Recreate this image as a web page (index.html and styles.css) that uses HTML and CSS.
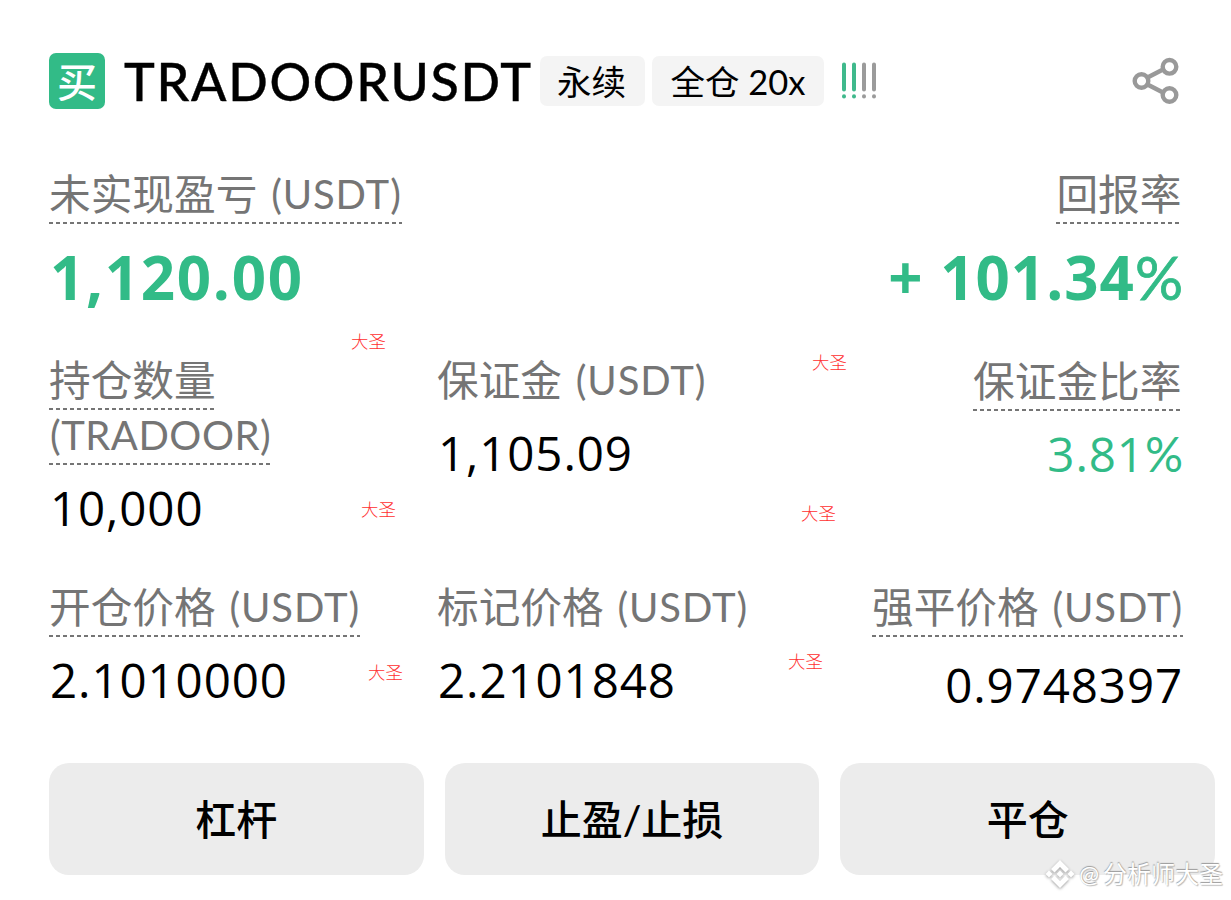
FILE: index.html
```
<!DOCTYPE html>
<html lang="zh-CN">
<head>
  <meta charset="UTF-8">
  <meta name="viewport" content="width=device-width, initial-scale=1.0">
  <title>TRADOORUSDT</title>
  <link rel="stylesheet" href="styles.css">
</head>
<body>
  <div class="position-card">
    <header class="card-header">
      <span class="side-badge">买</span>
      <h1 class="symbol">TRADOORUSDT</h1>
      <span class="tag tag-type">永续</span>
      <span class="tag tag-mode">全仓 <span class="leverage">20x</span></span>
      <svg class="risk-icon" width="38" height="40" viewBox="0 0 38 40" stroke-width="4" stroke-linecap="round">
        <g stroke="#3fb98c"><path d="M4 3.5v25M14 3.5v25M4 35.2v.2M14 35.2v.2"/></g>
        <g stroke="#9b9b9b"><path d="M24 3.5v25M34 3.5v25M24 35.2v.2M34 35.2v.2"/></g>
      </svg>
      <svg class="share-icon" width="48" height="48" viewBox="0 0 48 48" fill="none" stroke="#999" stroke-width="4.4">
        <circle cx="9.5" cy="24" r="6.8"/>
        <circle cx="37.5" cy="9.8" r="6.8"/>
        <circle cx="37.5" cy="38" r="6.8"/>
        <path d="M15.5 20.5L31 12.5M15.5 27.5L31 35.5"/>
      </svg>
    </header>

    <section class="row row-pnl">
      <div class="cell">
        <span class="label dashed">未实现盈亏 <span class="unit">(USDT)</span></span>
        <span class="value-big pnl">1,120.00</span>
      </div>
      <div class="cell right">
        <span class="label dashed short">回报率</span>
        <span class="value-big roi">+ 101.34<span class="percent">%</span></span>
      </div>
    </section>

    <section class="row row-size">
      <div class="cell">
        <span class="label dashed">持仓数量</span>
        <span class="label dashed"><span class="unit coin">(TRADOOR)</span></span>
        <span class="value">10,000</span>
      </div>
      <div class="cell">
        <span class="label">保证金 <span class="unit">(USDT)</span></span>
        <span class="value">1,105.09</span>
      </div>
      <div class="cell right ratio">
        <span class="label dashed short">保证金比率</span>
        <span class="value green">3.81<span class="percent">%</span></span>
      </div>
    </section>

    <section class="row row-price">
      <div class="cell">
        <span class="label dashed">开仓价格 <span class="unit">(USDT)</span></span>
        <span class="value">2.1010000</span>
      </div>
      <div class="cell mark">
        <span class="label">标记价格 <span class="unit">(USDT)</span></span>
        <span class="value">2.2101848</span>
      </div>
      <div class="cell right liq">
        <span class="label dashed">强平价格 <span class="unit">(USDT)</span></span>
        <span class="value">0.9748397</span>
      </div>
    </section>

    <div class="actions">
      <button type="button">杠杆</button>
      <button type="button">止盈/止损</button>
      <button type="button">平仓</button>
    </div>

    <!-- 水印 -->
    <span class="mark-text m1">大圣</span>
    <span class="mark-text m2">大圣</span>
    <span class="mark-text m3">大圣</span>
    <span class="mark-text m4">大圣</span>
    <span class="mark-text m5">大圣</span>
    <span class="mark-text m6">大圣</span>
    <div class="author-mark">
      <svg width="30" height="30" viewBox="0 0 30 30" fill="#fff">
        <path d="M15 1L24 10L20.5 13.5L15 8L9.5 13.5L6 10Z"/>
        <path d="M15 29L24 20L20.5 16.5L15 22L9.5 16.5L6 20Z"/>
        <path d="M15 11.5L18.5 15L15 18.5L11.5 15Z"/>
        <path d="M4 11.5L7.5 15L4 18.5L.5 15Z"/>
        <path d="M26 11.5L29.5 15L26 18.5L22.5 15Z"/>
      </svg>
      <span class="at">@</span><span>分析师大圣</span>
    </div>
  </div>
</body>
</html>
```

FILE: styles.css
```
:root {
  --green: #32bb87;
  --gray: #757575;
}

* {
  box-sizing: border-box;
}

body {
  margin: 0;
  background: #fff;
  color: #000;
  font-family: Lato, "Noto Sans CJK SC", sans-serif;
  overflow: hidden;
}

.position-card {
  position: relative;
  height: 900px;
  padding: 53px 48px 0 49px;
  white-space: nowrap;
  overflow: hidden;
}

.card-header {
  display: flex;
  align-items: center;
  height: 56px;
}

.side-badge {
  width: 56px;
  height: 56px;
  border-radius: 7px;
  background: var(--green);
  color: #fff;
  font-size: 40px;
  font-weight: 500;
  line-height: 59px;
  text-align: center;
}

.symbol {
  width: 408px;
  margin: 0 8px 0 19px;
  font-size: 52px;
  font-weight: 500;
  line-height: 60px;
  letter-spacing: 1.7px;
  -webkit-text-stroke: 0.4px #000;
}

.tag {
  height: 50px;
  border-radius: 7px;
  background: #f4f4f4;
  font-size: 34.5px;
  line-height: 51px;
  text-align: center;
}

.tag-type {
  width: 105px;
  padding-right: 2px;
}

.tag-mode {
  width: 172px;
  margin-left: 7px;
}

.risk-icon {
  margin-left: 16px;
}

.share-icon {
  margin-left: auto;
  margin-right: 3px;
}

.row {
  display: grid;
  grid-template-columns: 388px 1fr 1fr;
}

.row-pnl {
  grid-template-columns: 1fr 1fr;
  height: 186px;
  padding-top: 60px;
}

.row-size {
  height: 227px;
  padding-top: 60px;
}

.row-price {
  height: 241px;
  padding-top: 60px;
}

.cell {
  display: flex;
  flex-direction: column;
  align-items: flex-start;
}

.cell.right {
  align-items: flex-end;
}

.label {
  height: 55px;
  color: var(--gray);
  font-size: 41.7px;
  line-height: 50px;
}

.dashed {
  background: repeating-linear-gradient(90deg, var(--gray) 0 4px, transparent 4px 7px) left bottom / 100% 2px no-repeat;
}

.short {
  margin-right: 1.5px;
}

.unit {
  margin-left: 3px;
  font-size: 40px;
  letter-spacing: 0.9px;
  vertical-align: 1px;
}

.coin {
  margin-left: 1px;
  letter-spacing: 0.5px;
}

.value {
  height: 88px;
  padding-left: 1px;
  font-family: "Open Sans", Lato, sans-serif;
  font-size: 47.5px;
  line-height: 85px;
  letter-spacing: 0.9px;
}

.value-big {
  color: var(--green);
  font-family: "Open Sans", Lato, sans-serif;
  font-size: 60px;
  font-weight: 700;
  line-height: 107px;
}

.pnl {
  padding-left: 1px;
  letter-spacing: 1.7px;
}

.roi {
  letter-spacing: 1px;
}

.percent {
  font-family: Lato, sans-serif;
  font-weight: 400;
  letter-spacing: 0;
}

.roi .percent {
  -webkit-text-stroke: 0.8px var(--green);
}

.green {
  color: var(--green);
}

.ratio {
  padding-top: 1px;
}

.liq .value {
  margin-top: 5px;
}

.actions {
  display: grid;
  grid-template-columns: repeat(3, 1fr);
  gap: 21px;
  margin-right: -32px;
}

.actions button {
  height: 112px;
  padding: 0 0 4px;
  border: 0;
  border-radius: 20px;
  background: #ececec;
  color: #000;
  font-family: inherit;
  font-size: 41px;
  font-weight: 500;
}

.mark-text {
  position: absolute;
  color: #ff3030;
  font-size: 17.4px;
  font-weight: 300;
  line-height: 21px;
}

.m1 { left: 351px; top: 331px; }
.m2 { left: 812px; top: 352px; }
.m3 { left: 361px; top: 499px; }
.m4 { left: 801px; top: 503px; }
.m5 { left: 368px; top: 662px; }
.m6 { left: 788px; top: 651px; }

.author-mark {
  position: absolute;
  left: 1045px;
  top: 859px;
  display: flex;
  align-items: center;
  height: 30px;
  color: #fff;
  font-size: 24px;
  line-height: 30px;
  text-shadow: 0 -1px 1px #999, 1px 1px 1px #bbb;
}

.author-mark svg {
  overflow: visible;
  filter: drop-shadow(0 1px 1.5px #999);
}

.author-mark .at {
  width: 28px;
  text-align: center;
}
```
